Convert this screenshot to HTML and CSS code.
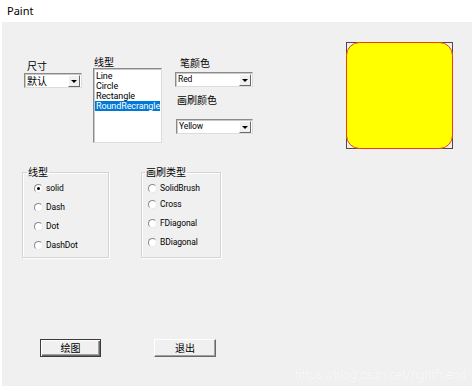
FILE: index.html
```html
<!DOCTYPE html>
<html lang="zh">
<head>
  <meta charset="UTF-8" />
  <title>Paint</title>
  <link rel="stylesheet" href="styles.css">
</head>
<body>

  <div class="titlebar">Paint</div>

  <div class="client">
    <div class="top-row">
      <div class="field size-field">
        <label class="caption">尺寸</label>
        <div class="combo"><span class="value">默认</span><span class="drop"></span></div>
      </div>

      <div class="field shape-field">
        <label class="caption">线型</label>
        <ul class="listbox">
          <li>Line</li>
          <li>Circle</li>
          <li>Rectangle</li>
          <li class="selected">RoundRecrangle</li>
        </ul>
      </div>

      <div class="field color-field">
        <label class="caption pen-caption">笔颜色</label>
        <div class="combo pen-combo"><span class="value">Red</span><span class="drop"></span></div>
        <label class="caption brush-caption">画刷颜色</label>
        <div class="combo brush-combo"><span class="value">Yellow</span><span class="drop"></span></div>
      </div>

      <!-- 预览 -->
      <div class="preview">
        <svg width="107" height="107" viewBox="0 0 107 107">
          <rect x="0.5" y="0.5" width="106" height="106" fill="none" stroke="#4a4a4a" />
          <rect x="0.5" y="0.5" width="106" height="106" rx="13" ry="13" fill="#ffff00" stroke="#f03c14" />
        </svg>
      </div>
    </div>

    <div class="group-row">
      <fieldset class="group line-group">
        <legend>线型</legend>
        <div class="radio-row"><span class="radio checked"></span>solid</div>
        <div class="radio-row"><span class="radio"></span>Dash</div>
        <div class="radio-row"><span class="radio"></span>Dot</div>
        <div class="radio-row"><span class="radio"></span>DashDot</div>
      </fieldset>

      <fieldset class="group brush-group">
        <legend>画刷类型</legend>
        <div class="radio-row"><span class="radio"></span>SolidBrush</div>
        <div class="radio-row tight"><span class="radio"></span>Cross</div>
        <div class="radio-row"><span class="radio"></span>FDiagonal</div>
        <div class="radio-row"><span class="radio"></span>BDiagonal</div>
      </fieldset>
    </div>

    <div class="button-row">
      <button class="btn default-btn">绘图</button>
      <button class="btn exit-btn">退出</button>
    </div>

    <div class="watermark">https://blog.csdn.net/rightfriend</div>
  </div>

</body>
</html>
```

FILE: styles.css
```css
body {
  margin: 0;
  background: #ffffff;
  font-family: "Roboto", "Noto Sans CJK SC", sans-serif;
  font-size: 8.5px;
  letter-spacing: -0.1px;
  color: #000;
}

.titlebar {
  height: 22px;
  line-height: 22px;
  padding-left: 7px;
  font-size: 11px;
  letter-spacing: 0;
  font-family: "Noto Sans", "Noto Sans CJK SC", sans-serif;
}

.client {
  position: relative;
  margin: 0 2px;
  height: 364px;
  background: #f0f0f0;
  overflow: hidden;
}

/* Felső sor */
.top-row {
  display: flex;
  align-items: flex-start;
  padding-top: 20px;
}

.field {
  display: flex;
  flex-direction: column;
}

.caption {
  display: block;
  height: 12px;
  line-height: 12px;
  font-size: 10px;
  letter-spacing: 0;
  font-family: "Noto Sans CJK SC", sans-serif;
}

.size-field {
  margin-left: 22px;
  margin-top: 18px;
}

.size-field .caption {
  padding-left: 3px;
}

.size-field .combo {
  margin-top: 1px;
  width: 58px;
}

.size-field .value {
  font-family: "Noto Sans CJK SC", sans-serif;
  font-size: 10px;
}

.combo {
  box-sizing: border-box;
  display: flex;
  align-items: center;
  height: 15px;
  background: #fff;
  border-top: 1px solid #8a8a8a;
  border-left: 1px solid #8a8a8a;
  border-right: 1px solid #dcdcdc;
  border-bottom: 1px solid #dcdcdc;
  box-shadow: inset 1px 1px 0 #c8c8c8;
}

.combo .value {
  flex: 1;
  padding-left: 2px;
  line-height: 13px;
}

.drop {
  position: relative;
  box-sizing: border-box;
  width: 12px;
  height: 12px;
  margin-right: 1px;
  background: #f0f0f0;
  border-top: 1px solid #fff;
  border-left: 1px solid #fff;
  border-right: 1px solid #696969;
  border-bottom: 1px solid #696969;
}

.drop::after {
  content: "";
  position: absolute;
  left: 2px;
  top: 4px;
  border-left: 3px solid transparent;
  border-right: 3px solid transparent;
  border-top: 3px solid #000;
}

.shape-field {
  margin-left: 11px;
  margin-top: 14px;
}

.shape-field .caption {
  padding-left: 1px;
}

.listbox {
  box-sizing: border-box;
  list-style: none;
  margin: 0;
  padding: 2px 0 0 1px;
  width: 69px;
  height: 75px;
  font-size: 9px;
  background: #fff;
  border-top: 1px solid #8a8a8a;
  border-left: 1px solid #8a8a8a;
  border-right: 1px solid #dcdcdc;
  border-bottom: 1px solid #dcdcdc;
  box-shadow: inset 1px 1px 0 #c8c8c8;
}

.listbox li {
  height: 10px;
  line-height: 10px;
  padding-left: 1px;
  white-space: nowrap;
}

.listbox li.selected {
  background: #0078d7;
  color: #fff;
  margin-right: 1px;
}

.color-field {
  margin-left: 13px;
  margin-top: 15px;
}

.pen-caption {
  height: 14px;
  padding-left: 5px;
}

.pen-combo {
  margin-top: 1px;
  width: 78px;
}

.brush-caption {
  margin-top: 7px;
  padding-left: 2px;
}

.brush-combo {
  margin-top: 13px;
  margin-left: 1px;
  width: 77px;
}

.preview {
  margin-left: 93px;
  width: 107px;
  height: 107px;
}

.preview svg {
  display: block;
}

/* Csoportok */
.group-row {
  display: flex;
  margin-top: 17px;
  padding-left: 20px;
  gap: 32px;
}

.group {
  box-sizing: border-box;
  margin: 0;
  height: 92px;
  border: 1px solid #d5d5d5;
  box-shadow: 1px 1px 0 #fff, inset 1px 1px 0 #fff;
  display: flex;
  flex-direction: column;
  gap: 7px;
}

.group legend {
  padding: 0 1px;
  height: 12px;
  line-height: 12px;
  font-size: 10px;
  letter-spacing: 0;
  font-family: "Noto Sans CJK SC", sans-serif;
}

.line-group {
  width: 87px;
  padding: 4px 0 0 11px;
}

.line-group legend {
  margin-left: -7px;
}

.brush-group {
  width: 80px;
  padding: 4px 0 0 6px;
}

.brush-group legend {
  margin-left: -3px;
}

.brush-group .tight {
  margin-top: -3px;
}

.radio-row {
  display: flex;
  align-items: center;
  gap: 3px;
  height: 12px;
  line-height: 12px;
  white-space: nowrap;
}

.radio {
  position: relative;
  box-sizing: border-box;
  width: 9px;
  height: 9px;
  border-radius: 50%;
  background: #fff;
  border: 1px solid;
  border-color: #8a8a8a #e8e8e8 #e8e8e8 #8a8a8a;
}

.radio.checked::after {
  content: "";
  position: absolute;
  left: 2px;
  top: 2px;
  width: 3px;
  height: 3px;
  border-radius: 50%;
  background: #000;
}

/* Gombok */
.button-row {
  display: flex;
  margin-top: 81px;
  padding-left: 38px;
  gap: 53px;
}

.btn {
  box-sizing: border-box;
  height: 18px;
  padding: 0;
  background: #f0f0f0;
  font-family: "Noto Sans CJK SC", sans-serif;
  font-size: 10px;
  line-height: 14px;
  color: #000;
  border: 1px solid;
  border-color: #fff #696969 #696969 #fff;
  box-shadow: inset -1px -1px 0 #a0a0a0;
}

.default-btn {
  width: 61px;
  border: 1px solid #3c3c3c;
  box-shadow: inset 1px 1px 0 #fff, inset -1px -1px 0 #696969, inset -2px -2px 0 #a0a0a0;
}

.exit-btn {
  width: 62px;
}

.watermark {
  position: absolute;
  right: 6px;
  bottom: 4px;
  font-size: 12px;
  letter-spacing: 0;
  color: #f8f8f8;
  text-shadow: 0 0 1px #e8e8e8;
}
```
